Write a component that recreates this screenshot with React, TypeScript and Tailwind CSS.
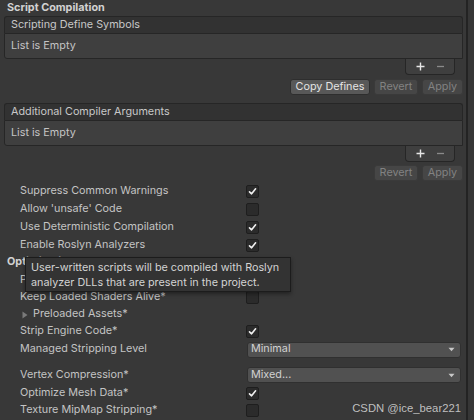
import React from "react";

const font = { fontFamily: "Inter, 'Noto Sans', sans-serif" };

function Check({ on }: { on: boolean }) {
  return (
    <div className="w-[13px] h-[13px] rounded-[2px] bg-[#2b2b2b] border border-[#1e1e1e] flex items-center justify-center">
      {on && (
        <svg width="9" height="9" viewBox="0 0 9 9">
          <path d="M1.5 4.8 L3.6 6.8 L7.6 1.8" stroke="#f0f0f0" strokeWidth="1.6" fill="none" strokeLinecap="round" strokeLinejoin="round" />
        </svg>
      )}
    </div>
  );
}

function Row({ label, h, children, indent }: { label: React.ReactNode; h: string; children?: React.ReactNode; indent?: boolean }) {
  return (
    <div className={`grid grid-cols-[246px_1fr] items-center pr-[5px] ${h}`}>
      <div className={`${indent ? "pl-[22px]" : "pl-[20px]"} text-[10.8px] text-[#c4c4c4] whitespace-nowrap flex items-center`}>{label}</div>
      <div className="flex items-center">{children}</div>
    </div>
  );
}

function Dropdown({ value }: { value: string }) {
  return (
    <div className="w-full h-[16px] rounded-[3px] bg-[#515151] border border-[#303030] flex items-center justify-between pl-[3px] pr-[5px] text-[10.8px] text-[#d2d2d2]">
      <span>{value}</span>
      <svg width="7" height="5" viewBox="0 0 7 5">
        <path d="M0.5 0.8 L6.5 0.8 L3.5 4.2 Z" fill="#c8c8c8" />
      </svg>
    </div>
  );
}

function ReorderList({ title }: { title: string }) {
  return (
    <div>
      <div className="ml-[4px] mr-[3px]">
        <div className="h-[17px] bg-[#323232] border border-b-0 border-[#262626] rounded-t-[3px] flex items-center pl-[6px] text-[10.8px] text-[#c8c8c8]">{title}</div>
        <div className="h-[26px] bg-[#3f3f3f] border border-[#262626] rounded-bl-[3px] flex items-center pl-[6px] text-[10.8px] text-[#c4c4c4]">List is Empty</div>
      </div>
      <div className="flex justify-end mr-[11px]">
        <div className="w-[50px] h-[16px] bg-[#3f3f3f] border border-t-0 border-[#262626] rounded-b-[4px] flex items-center justify-around px-[4px]">
          <svg width="9" height="9" viewBox="0 0 9 9">
            <path d="M4.5 0.5 V8.5 M0.5 4.5 H8.5" stroke="#e6e6e6" strokeWidth="1.4" />
          </svg>
          <svg width="9" height="9" viewBox="0 0 9 9">
            <path d="M1 4.5 H8" stroke="#8a8a8a" strokeWidth="1.3" />
          </svg>
        </div>
      </div>
    </div>
  );
}

function Btn({ children, disabled, w }: { children: React.ReactNode; disabled?: boolean; w: string }) {
  return (
    <div
      className={`${w} h-[16px] rounded-[3px] border flex items-center justify-center text-[10.8px] ${
        disabled ? "bg-[#464646] border-[#3a3a3a] text-[#828282]" : "bg-[#585858] border-[#2e2e2e] text-[#e4e4e4]"
      }`}
    >
      {children}
    </div>
  );
}

export default function App() {
  return (
    <div className="w-[474px] h-[420px] bg-[#383838] flex overflow-hidden relative" style={font}>
      <div className="w-[466px] flex flex-col">
        <div className="h-[16px] flex items-center pl-[7px] pt-[1px] text-[10.8px] font-bold text-[#d2d2d2]">Script Compilation</div>
        <ReorderList title="Scripting Define Symbols" />
        <div className="mt-[4px] mr-[3px] flex justify-end gap-[4px]">
          <Btn w="w-[80px]">Copy Defines</Btn>
          <Btn w="w-[44px]" disabled>Revert</Btn>
          <Btn w="w-[41px]" disabled>Apply</Btn>
        </div>
        <div className="mt-[8px]">
          <ReorderList title="Additional Compiler Arguments" />
        </div>
        <div className="mt-[3px] mr-[3px] flex justify-end gap-[4px]">
          <Btn w="w-[44px]" disabled>Revert</Btn>
          <Btn w="w-[41px]" disabled>Apply</Btn>
        </div>
        <div className="h-[1px]" />
        <Row label="Suppress Common Warnings" h="h-[18px]"><Check on /></Row>
        <Row label="Allow 'unsafe' Code" h="h-[18px]"><Check on={false} /></Row>
        <Row label="Use Deterministic Compilation" h="h-[18px]"><Check on /></Row>
        <Row label="Enable Roslyn Analyzers" h="h-[18px]"><Check on /></Row>
        <div className="h-[17px] flex items-center pl-[7px] text-[10.8px] font-bold text-[#d2d2d2]">Optimization</div>
        <Row label="Prebake Collision Meshes*" h="h-[18px]"><Check on={false} /></Row>
        <Row label="Keep Loaded Shaders Alive*" h="h-[17px]"><Check on={false} /></Row>
        <Row
          indent
          label={
            <>
              <svg width="6" height="8" viewBox="0 0 6 8" className="mr-[5px]">
                <path d="M0.5 0.5 L5.5 4 L0.5 7.5 Z" fill="#7a7a7a" />
              </svg>
              Preloaded Assets*
            </>
          }
          h="h-[17px]"
        />
        <Row label="Strip Engine Code*" h="h-[17px]"><Check on /></Row>
        <div className="grid grid-cols-[247px_1fr] items-center pr-[5px] h-[19px]">
          <div className="pl-[20px] text-[10.8px] text-[#c4c4c4]">Managed Stripping Level</div>
          <Dropdown value="Minimal" />
        </div>
        <div className="h-[7px]" />
        <div className="grid grid-cols-[247px_1fr] items-center pr-[5px] h-[18px]">
          <div className="pl-[20px] text-[10.8px] text-[#c4c4c4]">Vertex Compression*</div>
          <Dropdown value="Mixed..." />
        </div>
        <Row label="Optimize Mesh Data*" h="h-[18px]"><Check on /></Row>
        <Row label="Texture MipMap Stripping*" h="h-[17px]"><Check on={false} /></Row>
      </div>
      <div className="w-[8px] h-full border-l-2 border-[#232323] bg-[#363636]" />

      <div className="absolute left-[25px] top-[257px] w-[266px] h-[35px] bg-[#333333] border border-[#1c1c1c] shadow-[0_2px_4px_rgba(0,0,0,0.4)] pl-[5px] pt-[2px] text-[10.8px] leading-[15px] text-[#d4d4d4] whitespace-nowrap">
        <div>User-written scripts will be compiled with Roslyn</div>
        <div>analyzer DLLs that are present in the project.</div>
      </div>

      <div
        className="absolute right-[13px] top-[401px] text-[11.3px] leading-[14px] text-[#d0d0d0]/90"
        style={{ fontFamily: "'Liberation Sans', Arial, sans-serif" }}
      >
        CSDN @ice_bear221
      </div>
    </div>
  );
}
